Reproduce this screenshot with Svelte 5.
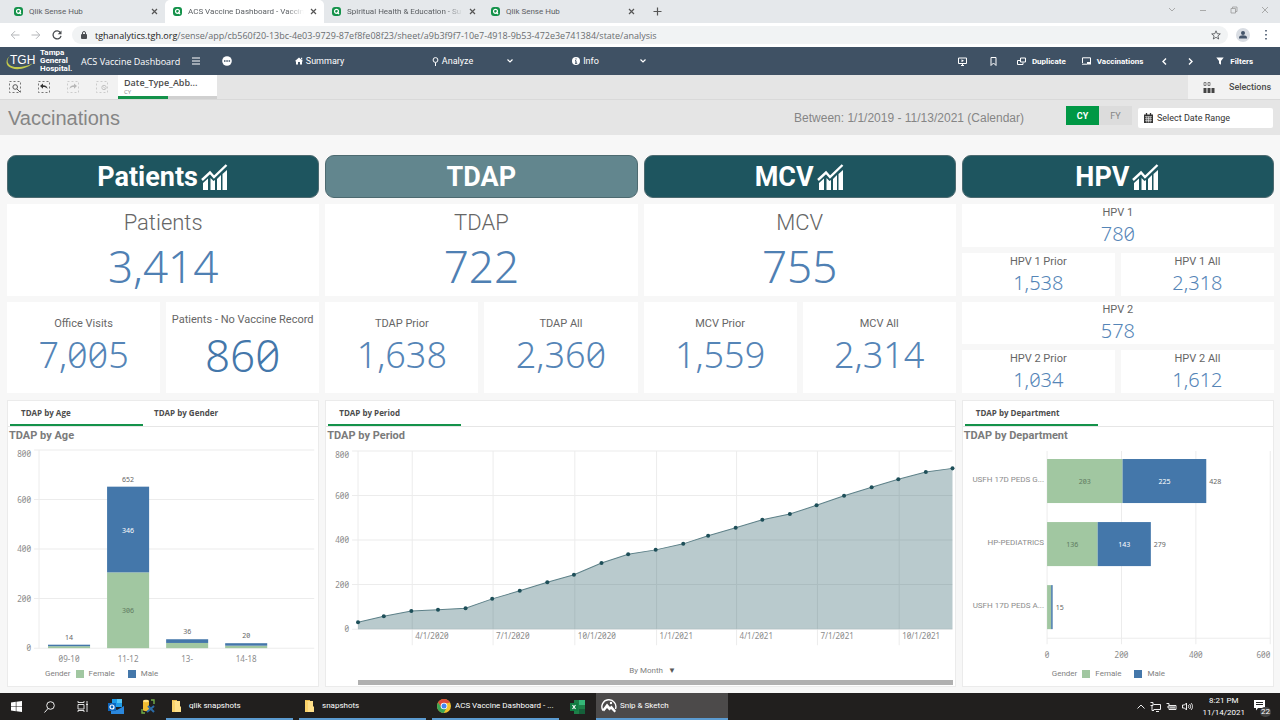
<script lang="ts">
  type Kpi = { label: string; value: string; size: string };
  type Bar = { name: string; female: number; male: number; showParts: boolean };

  const browserTabs = [
    { title: "Qlik Sense Hub", active: false },
    { title: "ACS Vaccine Dashboard - Vaccin", active: true },
    { title: "Spiritual Health & Education - Su", active: false },
    { title: "Qlik Sense Hub", active: false },
  ];

  const groups: { title: string; icon: boolean; current: boolean; rows: Kpi[][] }[] = [
    {
      title: "Patients",
      icon: true,
      current: false,
      rows: [
        [{ label: "Patients", value: "3,414", size: "large" }],
        [
          { label: "Office Visits", value: "7,005", size: "medium" },
          { label: "Patients - No Vaccine Record", value: "860", size: "medium strong" },
        ],
      ],
    },
    {
      title: "TDAP",
      icon: false,
      current: true,
      rows: [
        [{ label: "TDAP", value: "722", size: "large" }],
        [
          { label: "TDAP Prior", value: "1,638", size: "medium" },
          { label: "TDAP All", value: "2,360", size: "medium" },
        ],
      ],
    },
    {
      title: "MCV",
      icon: true,
      current: false,
      rows: [
        [{ label: "MCV", value: "755", size: "large" }],
        [
          { label: "MCV Prior", value: "1,559", size: "medium" },
          { label: "MCV All", value: "2,314", size: "medium" },
        ],
      ],
    },
    {
      title: "HPV",
      icon: true,
      current: false,
      rows: [
        [{ label: "HPV 1", value: "780", size: "small" }],
        [
          { label: "HPV 1 Prior", value: "1,538", size: "small" },
          { label: "HPV 1 All", value: "2,318", size: "small" },
        ],
        [{ label: "HPV 2", value: "578", size: "small" }],
        [
          { label: "HPV 2 Prior", value: "1,034", size: "small" },
          { label: "HPV 2 All", value: "1,612", size: "small" },
        ],
      ],
    },
  ];

  const ages: Bar[] = [
    { name: "09-10", female: 8, male: 6, showParts: false },
    { name: "11-12", female: 306, male: 346, showParts: true },
    { name: "13-", female: 21, male: 15, showParts: false },
    { name: "14-18", female: 10, male: 10, showParts: false },
  ];

  const departments: Bar[] = [
    { name: "USFH 17D PEDS G...", female: 203, male: 225, showParts: true },
    { name: "HP-PEDIATRICS", female: 136, male: 143, showParts: true },
    { name: "USFH 17D PEDS A...", female: 11, male: 4, showParts: false },
  ];

  // running totals at each month end, January 2020 to November 2021
  const totals = [
    31, 58, 82, 87, 94, 136, 172, 211, 244, 297, 336, 356, 383, 419, 455, 491, 517, 556, 599, 637,
    673, 706, 722,
  ];
  const quarters = [
    [2020, 4],
    [2020, 7],
    [2020, 10],
    [2021, 1],
    [2021, 4],
    [2021, 7],
    [2021, 10],
  ];

  const DAY = 86400000;
  const start = Date.UTC(2020, 0, 31);
  const span = (Date.UTC(2021, 10, 30) - start) / DAY;

  const ticks = [0, 200, 400, 600, 800];

  const ageY = (v: number) => 204 - (v * 198) / 800;
  const ageX = (i: number) => 40 + i * 59;
  const periodY = (v: number) => 185 - (v * 178) / 800;
  const periodX = (time: number) => 32 + ((time - start) / DAY / span) * 594;
  const deptX = (v: number) => 84 + (v * 223) / 600;
  const deptY = (i: number) => 15 + i * 63;

  const points = totals.map((v, i) => ({ x: periodX(Date.UTC(2020, i + 1, 0)), y: periodY(v) }));
  const line = points.map((p) => `${p.x},${p.y}`).join(" ");
</script>

{#snippet qlik()}
  <svg width="9" height="9" viewBox="0 0 9 9" aria-hidden="true">
    <rect width="9" height="9" rx="3" fill="#14924a" />
    <circle cx="4.5" cy="4.3" r="2" fill="none" stroke="#fff" stroke-width="1.2" />
    <path d="M5 5l2 2" stroke="#fff" stroke-width="1.2" />
  </svg>
{/snippet}

{#snippet chevron()}
  <svg class="chevron" width="6" height="4" viewBox="0 0 6 4" aria-hidden="true">
    <path d="M.5 .5L3 3L5.5 .5" fill="none" stroke="currentColor" stroke-width="1.2" />
  </svg>
{/snippet}

{#snippet folder()}
  <svg width="12" height="14" viewBox="0 0 12 14" aria-hidden="true">
    <path d="M1 1h5v12H1z" fill="#e9b94a" />
    <path d="M3 2h6v5l1 1v5H3z" fill="#ffe08a" />
    <path d="M1 1l3 2v10H1z" fill="#fbd36b" />
  </svg>
{/snippet}

{#snippet legend()}
  <span>Gender</span>
  <i class="swatch female"></i><span>Female</span>
  <i class="swatch male"></i><span>Male</span>
{/snippet}

<div class="screen">
  <div class="tab-strip">
    {#each browserTabs as tab}
      <div class="tab" class:active={tab.active}>
        {@render qlik()}
        <a href="#tab" class:long={tab.title.length > 20}>{tab.title}</a>
        <button aria-label="Close tab">
          <svg width="7" height="7" viewBox="0 0 7 7"><path d="M1 1l5 5M6 1l-5 5" stroke="#555" stroke-width="1.2" /></svg>
        </button>
      </div>
    {/each}
    <button class="new-tab" aria-label="New tab">
      <svg width="9" height="9" viewBox="0 0 9 9"><path d="M4.5 .5v8M.5 4.5h8" stroke="#555" stroke-width="1.2" /></svg>
    </button>
    <div class="window-buttons">
      <button aria-label="Search tabs"><svg width="8" height="8" viewBox="0 0 8 8"><path d="M1 2l3 3l3-3" /></svg></button>
      <button aria-label="Minimize"><svg width="8" height="8" viewBox="0 0 8 8"><path d="M1 4.5h6" /></svg></button>
      <button aria-label="Restore"><svg width="8" height="8" viewBox="0 0 8 8"><path d="M1 2.5h4.5v4.5h-4.5zM2.5 2.5v-1.5h4.5v4.5h-1.5" /></svg></button>
      <button aria-label="Close window"><svg width="8" height="8" viewBox="0 0 8 8"><path d="M1 1l6 6M7 1l-6 6" /></svg></button>
    </div>
  </div>

  <div class="address-row">
    <button aria-label="Back"><svg width="10" height="10" viewBox="0 0 10 10"><path d="M9.5 5h-8M5 1.2L1.2 5L5 8.8" stroke="#b4b6b9" /></svg></button>
    <button aria-label="Forward"><svg width="10" height="10" viewBox="0 0 10 10"><path d="M.5 5h8M5 1.2L8.8 5L5 8.8" stroke="#b4b6b9" /></svg></button>
    <button aria-label="Reload">
      <svg width="10" height="10" viewBox="0 0 10 10">
        <path d="M8.5 2.8A4 4 0 1 0 9 5.8" stroke="#4a4d51" stroke-width="1.3" />
        <path d="M9.5 .5v3.8H5.7z" class="arrow" />
      </svg>
    </button>
    <div class="address">
      <svg width="6" height="8" viewBox="0 0 6 8" aria-hidden="true">
        <rect y="3" width="6" height="5" rx="1" fill="#4a4d51" />
        <path d="M1.5 3.5V2a1.5 1.5 0 0 1 3 0v1.5" fill="none" stroke="#4a4d51" />
      </svg>
      <span class="url"><b>tghanalytics.tgh.org</b>/sense/app/cb560f20-13bc-4e03-9729-87ef8fe08f23/sheet/a9b3f9f7-10e7-4918-9b53-472e3e741384/state/analysis</span>
      <svg width="10" height="10" viewBox="0 0 10 10" aria-hidden="true">
        <path d="M5 .8l1.2 2.9l3.1 .2l-2.400 2l.8 3.1L5 7.3L2.3 9l.8-3.1l-2.400-2l3.1-.2z" fill="none" stroke="#4a4d51" stroke-width=".8" />
      </svg>
    </div>
    <button class="profile" aria-label="Profile">
      <svg width="14" height="14" viewBox="0 0 14 14">
        <circle cx="7" cy="7" r="7" fill="#d9dde3" />
        <circle cx="7" cy="5" r="2" fill="#44546a" />
        <path d="M3 10.5V9.5c0-3 8-3 8 0v1z" />
      </svg>
    </button>
    <button class="more" aria-label="Browser menu">
      <svg width="4" height="10" viewBox="0 0 4 10"><path d="M1.200 0h1.6v1.6h-1.6zM1.200 4h1.6v1.6h-1.6zM1.200 8h1.6v1.6h-1.6z" /></svg>
    </button>
  </div>

  <header class="app-bar">
    <div class="brand">
      <svg width="30" height="18" viewBox="0 0 30 18" aria-hidden="true">
        <path d="M4 4C-1 9 2 15 11 15C18 15 24 13 27 11C20 18 7 19 2 14C-1 10 1 6 4 4z" fill="#c4ca4c" />
        <text x="4" y="12" class="tgh">TGH</text>
      </svg>
      <div class="brand-name">Tampa<br />General<br />Hospital.</div>
    </div>
    <span class="app-name">ACS Vaccine Dashboard</span>
    <button aria-label="Navigation menu">
      <svg width="8" height="8" viewBox="0 0 8 8"><path d="M0 1h8M0 4h8M0 7h8" stroke="#fff" stroke-width="1.2" /></svg>
    </button>
    <button class="dots" aria-label="More options">
      <svg width="10" height="10" viewBox="0 0 10 10">
        <circle cx="5" cy="5" r="4.8" fill="#fff" />
        <path d="M2 4.300h1.5v1.5H2zM4.300 4.300h1.5v1.5H4.300zM6.600 4.300h1.5v1.5H6.600z" fill="#3f5164" />
      </svg>
    </button>
    <nav>
      <a href="#summary">
        <svg width="8" height="8" viewBox="0 0 8 8"><path d="M4 .5L8 4L7 4.5V7.5H5V5H3v2.5H1V4.5L0 4zM6 .8h1.2v2L6 1.8z" fill="#fff" /></svg>
        Summary
      </a>
      <a href="#analyze">
        <svg width="7" height="9" viewBox="0 0 7 9"><circle cx="3.5" cy="3" r="2.4" fill="none" stroke="#fff" /><path d="M3.5 5.5V9" stroke="#fff" /></svg>
        Analyze
        {@render chevron()}
      </a>
      <a href="#info">
        <svg width="8" height="8" viewBox="0 0 8 8"><circle cx="4" cy="4" r="4" fill="#fff" /><path d="M4 1.3v1.2M3 3.7h1v2.5M3 6.3h2.2" stroke="#3f5164" fill="none" /></svg>
        Info
        {@render chevron()}
      </a>
    </nav>
    <div class="app-actions">
      <button class="only-icon" aria-label="Present">
        <svg width="9" height="9" viewBox="0 0 9 9"><path d="M.5 1h8v5.5h-8zM3 8.5h3M4.5 6.5v2" fill="none" stroke="#fff" /><path d="M3.5 2.3l2.5 1.5l-2.5 1.5z" fill="#fff" /></svg>
      </button>
      <button class="only-icon" aria-label="Bookmarks">
        <svg width="7" height="9" viewBox="0 0 7 9"><path d="M1 .5h5v8L3.5 6L1 8.5z" fill="none" stroke="#fff" /></svg>
      </button>
      <button>
        <svg width="9" height="9" viewBox="0 0 9 9"><path d="M3.5 1h5v4h-5zM3 3.5H.5v4H6V5.5" fill="none" stroke="#fff" /></svg>
        Duplicate
      </button>
      <button>
        <svg width="9" height="8" viewBox="0 0 9 8"><path d="M.5 6V.8h8V6M0 7.2h5" fill="none" stroke="#fff" /><path d="M5 5h4v2.5H5z" fill="#fff" /></svg>
        Vaccinations
      </button>
      <button aria-label="Previous sheet"><svg width="5" height="7" viewBox="0 0 5 7"><path d="M4 .5L1 3.5L4 6.5" fill="none" stroke="#fff" stroke-width="1.4" /></svg></button>
      <button aria-label="Next sheet"><svg width="5" height="7" viewBox="0 0 5 7"><path d="M1 .5L4 3.5L1 6.5" fill="none" stroke="#fff" stroke-width="1.4" /></svg></button>
      <button class="filters">
        <svg width="8" height="8" viewBox="0 0 8 8"><path d="M.3 .5h7.4L5 4v3.7L3 6.5V4z" fill="#fff" /></svg>
        Filters
      </button>
    </div>
  </header>

  <div class="selection-bar">
    <div class="tools">
      <button aria-label="Smart search">
        <svg width="12" height="12" viewBox="0 0 12 12"><path class="dash" d="M.5 .5h11v11h-11z" /><circle cx="6.2" cy="6" r="2.3" /><path d="M8 8l3 3" /></svg>
      </button>
      <button aria-label="Step back">
        <svg width="12" height="12" viewBox="0 0 12 12"><path class="dash" d="M.5 .5h11v11h-11z" /><path d="M2 5l3-2.5v1.7c3 0 4.5 1.3 4.5 3.8c-1-1.5-2.200-2-4.5-2v1.7z" class="solid" /></svg>
      </button>
      <button aria-label="Step forward" disabled>
        <svg width="12" height="12" viewBox="0 0 12 12"><path class="dash" d="M.5 .5h11v11h-11z" /><path d="M10 5L7 2.5v1.7c-3 0-4.5 1.3-4.5 3.8c1-1.5 2.200-2 4.5-2v1.7z" class="solid" /></svg>
      </button>
      <button aria-label="Clear all selections" disabled>
        <svg width="12" height="12" viewBox="0 0 12 12"><path class="dash" d="M.5 .5h11v11h-11z" /><circle cx="8" cy="6.5" r="2.2" /><path d="M6.8 5.3l2.4 2.4" /></svg>
      </button>
    </div>
    <button class="selection">
      <strong>Date_Type_Abb...</strong>
      <small>CY</small>
      <span class="share"></span>
    </button>
    <button class="selections">
      <svg width="12" height="11" viewBox="0 0 12 11"><path d="M1 .5h2v3H1zM5 .5h2v3H5z" fill="none" stroke="#666" stroke-width=".8" /><path d="M.5 6h3v5h-3zM4.5 6h3v5h-3zM8.5 6h3v5h-3z" fill="#444" /></svg>
      Selections
    </button>
  </div>

  <div class="sheet-title">
    <h1>Vaccinations</h1>
    <span class="between">Between: 1/1/2019 - 11/13/2021 (Calendar)</span>
    <div class="year-type">
      <button class="on">CY</button><button>FY</button>
    </div>
    <button class="date-range">
      <svg width="9" height="10" viewBox="0 0 9 10"><path d="M0 1.5h9V10H0z" fill="#333" /><path d="M2.5 0v2.5M6.5 0v2.5" stroke="#333" stroke-width="1.3" /><path d="M1 3.7h7M1 5.7h7M1 7.7h7M2.8 3.5V9.5M4.5 3.5V9.5M6.2 3.5V9.5" stroke="#fff" stroke-width=".6" /></svg>
      Select Date Range
    </button>
  </div>

  <main>
    {#each groups as group}
      <section class="group">
        <button class="group-title" class:current={group.current}>
          {group.title}
          {#if group.icon}
            <svg width="28" height="26" viewBox="0 0 28 26" aria-hidden="true">
              <path d="M1 16L9 8.5l4 4.5L25.500 1" fill="none" stroke="#fff" stroke-width="2.4" />
              <path d="M2 19l5-4.5V26H2zM9.500 14l3 3l1.5-1V26H9.500zM16 15l4-4V26h-4zM21.5 10L26 6v20h-4.5z" fill="#fff" />
            </svg>
          {/if}
        </button>
        {#each group.rows as row}
          <div class="kpi-row">
            {#each row as kpi}
              <div class="kpi {kpi.size}">
                <span class="label">{kpi.label}</span>
                <span class="value">{kpi.value}</span>
              </div>
            {/each}
          </div>
        {/each}
      </section>
    {/each}

    <section class="panel">
      <div class="panel-tabs">
        <button class="on">TDAP by Age</button>
        <button>TDAP by Gender</button>
      </div>
      <h2>TDAP by Age</h2>
      <svg class="chart" viewBox="0 0 310 220">
        {#each ticks as t}
          <line class="grid" x1="26" x2="306" y1={ageY(t)} y2={ageY(t)} />
          <text class="end" x="23" y={t === 800 ? 13 : ageY(t) + 3}>{t}</text>
        {/each}
        <line class="grid" x1="31" x2="31" y1="6" y2="204" />
        {#each ages as bar, i}
          {@const total = bar.female + bar.male}
          <rect class="female" x={ageX(i)} y={ageY(bar.female)} width="42" height={204 - ageY(bar.female)} />
          <rect class="male" x={ageX(i)} y={ageY(total)} width="42" height={ageY(bar.female) - ageY(total)} />
          <text class="mid total" x={ageX(i) + 21} y={ageY(total) - 5}>{total}</text>
          <text class="mid" x={ageX(i) + 21} y="218">{bar.name}</text>
          {#if bar.showParts}
            <text class="mid on-male" x={ageX(i) + 21} y={ageY(bar.female + bar.male / 2) + 3}>{bar.male}</text>
            <text class="mid on-female" x={ageX(i) + 21} y={ageY(bar.female / 2) + 3}>{bar.female}</text>
          {/if}
        {/each}
      </svg>
      <div class="legend">{@render legend()}</div>
    </section>

    <section class="panel wide">
      <div class="panel-tabs">
        <button class="on">TDAP by Period</button>
      </div>
      <h2>TDAP by Period</h2>
      <svg class="chart" viewBox="0 0 628 220">
        {#each ticks as t}
          <line class="grid" x1="26" x2="626" y1={periodY(t)} y2={periodY(t)} />
          <text class="end" x="23" y={t === 800 ? 14 : periodY(t) + 3}>{t}</text>
        {/each}
        <line class="grid" x1="32" x2="32" y1="7" y2="185" />
        {#each quarters as [year, month]}
          {@const x = periodX(Date.UTC(year, month - 1, 1))}
          <line class="grid" x1={x} x2={x} y1="7" y2="201" />
          <text x={x + 3} y="195">{month}/1/{year}</text>
        {/each}
        <polygon class="area" points="32,185 {line} 626,185" />
        <polyline class="trend" points={line} />
        {#each points as p}
          <circle class="dot" cx={p.x} cy={p.y} r="2" />
        {/each}
      </svg>
      <button class="by-month">By Month <span>▼</span></button>
      <div class="scroller"></div>
    </section>

    <section class="panel">
      <div class="panel-tabs">
        <button class="on">TDAP by Department</button>
      </div>
      <h2>TDAP by Department</h2>
      <svg class="chart" viewBox="0 0 310 220">
        {#each [0, 200, 400, 600] as t}
          <line class="grid" x1={deptX(t)} x2={deptX(t)} y1="7" y2="200" />
          <text class={t === 600 ? "end" : "mid"} x={deptX(t)} y="214">{t}</text>
        {/each}
        <line class="grid" x1="84" x2="307" y1="194" y2="194" />
        {#each departments as bar, i}
          {@const total = bar.female + bar.male}
          <rect class="female" x="84" y={deptY(i)} width={deptX(bar.female) - 84} height="44" />
          <rect class="male" x={deptX(bar.female)} y={deptY(i)} width={deptX(total) - deptX(bar.female)} height="44" />
          <text class="end dept" x="81" y={deptY(i) + 23}>{bar.name}</text>
          <text class="total" x={deptX(total) + 3} y={deptY(i) + 25}>{total}</text>
          {#if bar.showParts}
            <text class="mid on-female" x={deptX(bar.female / 2)} y={deptY(i) + 25}>{bar.female}</text>
            <text class="mid on-male" x={deptX(bar.female + bar.male / 2)} y={deptY(i) + 25}>{bar.male}</text>
          {/if}
        {/each}
      </svg>
      <div class="legend inset">{@render legend()}</div>
    </section>
  </main>

  <footer class="taskbar">
    <button class="pin" aria-label="Start">
      <svg width="11" height="11" viewBox="0 0 11 11"><path d="M0 1.5l4.8-.7v4.4H0zM5.4 .7L11 0v5.2H5.4zM0 5.8h4.8v4.4L0 9.5zM5.4 5.8H11V11l-5.6-.7z" fill="#fff" /></svg>
    </button>
    <button class="pin" aria-label="Search">
      <svg width="11" height="12" viewBox="0 0 11 12"><circle cx="6.5" cy="4.5" r="3.8" fill="none" stroke="#eee" /><path d="M4 7.5L.5 11.5" stroke="#eee" /></svg>
    </button>
    <button class="pin" aria-label="Task view">
      <svg width="12" height="11" viewBox="0 0 12 11"><path d="M1 3.5h6v4.5H1zM1 0v1.5h6V0M1 11V9.5h6V11M10 0v2M10 5v6" fill="none" stroke="#ddd" /><path d="M9 2.5h2v2H9z" fill="#ddd" /></svg>
    </button>
    <button class="pin" aria-label="Outlook">
      <svg width="16" height="15" viewBox="0 0 16 15"><path d="M4 0h10v8H4z" fill="#1c9be8" /><path d="M9 0h5v4H9z" fill="#53c4f5" /><path d="M3 8l6 3l7-4v8H3z" fill="#2b87dc" /><path d="M0 4h8v8H0z" fill="#0f66bd" /><circle cx="4" cy="8" r="2" fill="none" stroke="#fff" stroke-width="1.2" /></svg>
    </button>
    <button class="pin" aria-label="Database tools">
      <svg width="15" height="15" viewBox="0 0 15 15"><path d="M2 2v9c0 1.5 6 1.5 6 0V2z" fill="#f0bd32" /><ellipse cx="5" cy="2" rx="3" ry="1.3" fill="#ffe383" /><path d="M10 1h3v4M1 10v4h3" fill="none" stroke="#71ad46" stroke-width="1.4" /><path d="M6 13l7-6M7 7l6 6" stroke="#2b6ca8" stroke-width="2" /></svg>
    </button>
    <button class="task">{@render folder()}<span>qlik snapshots</span></button>
    <button class="task">{@render folder()}<span>snapshots</span></button>
    <button class="task chrome">
      <svg width="14" height="14" viewBox="0 0 14 14">
        <circle cx="7" cy="7" r="7" fill="#f2c12e" />
        <path d="M1 3.5A7 7 0 0 1 13 3.5L7 5L4.3 8.5z" fill="#de4b3c" />
        <path d="M1 3.5A7 7 0 0 0 6.8 14L9.5 9L4.5 8.5z" fill="#3aa657" />
        <circle cx="7" cy="7" r="3.3" fill="#fff" /><circle cx="7" cy="7" r="2.5" fill="#4285f4" />
      </svg>
      <span>ACS Vaccine Dashboard - ...</span>
    </button>
    <button class="pin excel" aria-label="Excel">
      <svg width="15" height="14" viewBox="0 0 15 14"><path d="M4 0h11v14H4z" fill="#1d7f48" /><path d="M9 0h6v5H9z" fill="#35b778" /><path d="M9 9h6v5H9z" fill="#15603a" /><path d="M0 3h8v8H0z" fill="#107c41" /><path d="M2.5 5l3 4M5.5 5l-3 4" stroke="#fff" stroke-width="1.1" /></svg>
    </button>
    <button class="task snip">
      <svg width="16" height="14" viewBox="0 0 16 14"><path d="M2 11.5A7 7 0 1 1 14.500 10" fill="none" stroke="#fff" stroke-width="1.4" /><path d="M1.5 10.500L6 4.500l3 3.500l1.500-1.500L15 12l-1.500 1.5L10 10l-1.500 1.500L6 9l-3 3.500z" fill="#fff" /><circle cx="10" cy="4" r="1.2" fill="#fff" /></svg>
      <span>Snip &amp; Sketch</span>
    </button>
    <div class="tray">
      <svg width="8" height="5" viewBox="0 0 8 5"><path d="M.5 4.5L4 1l3.5 3.5" /></svg>
      <svg width="11" height="10" viewBox="0 0 11 10"><path d="M3.5 2.5h7v5h-7M6 9.5h3M.5 .5h2.5v3H.5M2 3.5v5h2" /></svg>
      <svg width="11" height="8" viewBox="0 0 11 8"><path d="M3 2.5h7v4H3zM.5 .5h2.5v2.5M2 3v2M4 4h5M4 5h5" /></svg>
      <svg width="11" height="9" viewBox="0 0 11 9"><path d="M.5 3h2L4.5 1v7l-2-2h-2zM6 3c1 1 1 2 0 3M7.5 2c1.5 1.5 1.5 3.5 0 5M9 1c2 2 2 5 0 7" /></svg>
      <div class="clock">8:21 PM<br />11/14/2021</div>
      <div class="notice">
        <svg width="11" height="11" viewBox="0 0 11 11"><path d="M0 0h11v8H4l-2 2.5V8H0z" /><path class="rule" d="M2 2.5h7M2 4.5h7" /></svg>
        <span class="count">22</span>
      </div>
    </div>
  </footer>
</div>

<style>
  :global(body) {
    background: #f7f7f7;
  }

  .screen {
    min-height: 100vh;
    display: flex;
    flex-direction: column;
    font-family: "Open Sans", "Noto Sans", sans-serif;
    font-size: 8px;
    color: #4c4c4c;
  }

  button {
    display: flex;
    align-items: center;
    justify-content: center;
    padding: 0;
    border: 0;
    background: none;
    color: inherit;
    font: inherit;
  }

  a {
    color: inherit;
    text-decoration: none;
  }

  svg {
    flex: none;
  }

  /* browser */
  .tab-strip {
    display: flex;
    height: 23px;
    padding-left: 6px;
    background: #e5e8eb;
    color: #5c6064;
    font-family: Roboto, sans-serif;
  }

  .tab {
    display: flex;
    align-items: center;
    gap: 6px;
    width: 159px;
    padding: 0 7px 0 8px;
    box-sizing: border-box;
    border-radius: 5px 5px 0 0;
  }

  .tab.active {
    background: #fff;
  }

  .tab a {
    flex: 1;
    white-space: nowrap;
  }

  .tab .long {
    mask-image: linear-gradient(90deg, #000 85%, transparent);
  }

  .new-tab {
    width: 30px;
  }

  .window-buttons {
    display: flex;
    margin-left: auto;
    padding-bottom: 4px;
  }

  .window-buttons button {
    width: 31px;
  }

  .window-buttons path {
    fill: none;
    stroke: #999;
    stroke-width: 0.8;
  }

  .address-row {
    display: flex;
    align-items: center;
    height: 24px;
    padding: 0 6px 0 4px;
    background: #fff;
  }

  .address-row > button {
    width: 21px;
  }

  .address-row path {
    fill: none;
  }

  .address-row .arrow {
    fill: #4a4d51;
  }

  .address-row .profile {
    width: 30px;
  }

  .address-row .more {
    width: 16px;
  }

  .address-row .profile path,
  .address-row .more path {
    fill: #44546a;
  }

  .address {
    flex: 1;
    display: flex;
    align-items: center;
    gap: 8px;
    height: 18px;
    margin-left: 5px;
    padding: 0 7px 0 9px;
    border-radius: 9px;
    background: #f1f3f4;
  }

  .url {
    flex: 1;
    color: #6a6d70;
    font-size: 9px;
  }

  .url b {
    font-weight: 400;
    color: #222;
  }

  /* app bar */
  .app-bar {
    display: flex;
    align-items: center;
    height: 28px;
    padding: 0 27px 0 6px;
    background: #3f5164;
    color: #fff;
  }

  .brand {
    display: flex;
    align-items: center;
    gap: 4px;
    width: 75px;
  }

  .tgh {
    fill: #fff;
    font: 12px "Liberation Sans", sans-serif;
  }

  .brand-name {
    font: bold 8px/8px Roboto, sans-serif;
  }

  .app-name {
    width: 111px;
    font-size: 9px;
    white-space: nowrap;
  }

  .app-bar .dots {
    width: 53px;
  }

  nav {
    display: flex;
    font: 9px Roboto, sans-serif;
  }

  nav a {
    position: relative;
    display: flex;
    align-items: center;
    justify-content: center;
    gap: 3px;
    width: 133px;
  }

  nav .chevron {
    position: absolute;
    right: 6px;
  }

  .app-actions {
    display: flex;
    gap: 16px;
    margin-left: auto;
    font: bold 8px Roboto, sans-serif;
  }

  .app-actions button {
    gap: 6px;
    min-width: 10px;
  }

  .app-actions .only-icon {
    min-width: 15px;
  }

  .app-actions .filters {
    margin-left: 5px;
  }

  /* selections */
  .selection-bar {
    display: flex;
    height: 25px;
    border-bottom: 1px solid #d9d9d9;
    box-sizing: border-box;
    background: #e5e5e5;
  }

  .tools {
    display: flex;
    padding-right: 2px;
    background: #f2f2f2;
  }

  .tools button {
    width: 29px;
  }

  .tools svg * {
    fill: none;
    stroke: #555;
  }

  .tools svg .dash {
    stroke-dasharray: 2 2;
    stroke-width: 0.8;
  }

  .tools svg .solid {
    fill: #333;
    stroke: none;
  }

  .tools button:disabled {
    opacity: 0.3;
  }

  .selection {
    flex-direction: column;
    align-items: flex-start;
    justify-content: space-between;
    width: 99px;
    background: #fff;
    line-height: 10px;
  }

  .selection strong {
    padding: 3px 6px 0;
    font-size: 9px;
    font-weight: 600;
  }

  .selection small {
    padding: 0 6px;
    font-size: 6px;
    line-height: 7px;
    color: #8c8c8c;
  }

  .share {
    width: 100%;
    height: 3px;
    background: linear-gradient(90deg, #14924a 50%, #d0d0d0 50%);
  }

  .selections {
    gap: 14px;
    width: 92px;
    padding-left: 6px;
    box-sizing: border-box;
    margin-left: auto;
    background: #f2f2f2;
    font: 500 9px Roboto, sans-serif;
  }

  .sheet-title {
    display: flex;
    align-items: center;
    height: 35px;
    padding: 0 7px 0 8px;
    background: #e5e5e5;
    color: #858585;
    font-family: "Liberation Sans", sans-serif;
  }

  h1 {
    margin: 0;
    font-size: 20px;
    font-weight: 400;
    line-height: 40px;
  }

  .between {
    margin-left: auto;
    font-size: 12px;
    line-height: 40px;
  }

  .year-type {
    display: flex;
    height: 19px;
    margin: 0 6px 4px 42px;
    font-family: Roboto, sans-serif;
    font-size: 9px;
  }

  .year-type button {
    width: 33px;
    background: #dcdcdc;
  }

  .year-type .on {
    background: #009845;
    color: #fff;
    font-weight: 700;
  }

  .date-range {
    justify-content: flex-start;
    gap: 4px;
    width: 135px;
    height: 20px;
    padding-left: 6px;
    border-radius: 2px;
    background: #fff;
    color: #333;
    font: 9px Roboto, sans-serif;
  }

  /* sheet */
  main {
    flex: 1;
    display: grid;
    grid-template-columns: repeat(4, minmax(0, 1fr));
    grid-template-rows: auto 1fr;
    gap: 7px 6px;
    padding: 20px 6px 6px 7px;
    font-family: Roboto, sans-serif;
  }

  .group {
    display: flex;
    flex-direction: column;
    gap: 6px;
    height: 238px;
  }

  .group-title {
    flex: none;
    gap: 3px;
    height: 43px;
    border: 1px solid #4d6a70;
    border-radius: 9px;
    background: #1e555f;
    color: #fff;
    font-size: 27px;
    font-weight: 700;
  }

  .group-title.current {
    background: #62868e;
  }

  .kpi-row {
    flex: 1;
    display: flex;
    gap: 6px;
  }

  .kpi {
    flex: 1 1 0;
    min-width: 0;
    display: flex;
    flex-direction: column;
    align-items: center;
    justify-content: center;
    background: #fff;
    white-space: nowrap;
  }

  .label {
    color: #666;
    font-size: 11px;
    line-height: 16px;
  }

  .value {
    color: #5585b7;
    font-family: "Noto Sans", sans-serif;
    font-variant-numeric: slashed-zero;
    font-weight: 300;
  }

  .large .label {
    font-size: 22px;
    font-weight: 300;
    line-height: 32px;
  }

  .large .value {
    color: #4f80b3;
    font-size: 44px;
    line-height: 54px;
  }

  .medium .value {
    font-size: 36px;
    line-height: 46px;
  }

  .strong .value {
    color: #4477aa;
    font-size: 44px;
    line-height: 54px;
  }

  .small .value {
    font-size: 20px;
    line-height: 25px;
  }

  .panel {
    display: flex;
    flex-direction: column;
    border: 1px solid #ebebeb;
    background: #fff;
  }

  .wide {
    grid-column: span 2;
  }

  .panel-tabs {
    display: flex;
    height: 25px;
    padding-left: 2px;
    border-bottom: 1px solid #e6e6e6;
    font-family: "Open Sans", sans-serif;
  }

  .panel-tabs button {
    justify-content: flex-start;
    width: 133px;
    padding-left: 11px;
    box-sizing: border-box;
    border-bottom: 2px solid transparent;
    font-weight: 700;
  }

  .panel-tabs .on {
    border-color: #14924a;
  }

  h2 {
    margin: 0;
    padding-left: 1px;
    color: #7b7b7b;
    font-size: 11px;
    line-height: 17px;
  }

  .chart {
    display: block;
    width: 100%;
  }

  .chart text {
    fill: #8c8c8c;
    font: 8px "Noto Sans", sans-serif;
    font-variant-numeric: slashed-zero;
  }

  .chart .mid {
    text-anchor: middle;
  }

  .chart .end {
    text-anchor: end;
  }

  .chart .dept {
    font-family: Roboto, sans-serif;
  }

  .chart .total {
    fill: #666;
    font-size: 7px;
  }

  .chart .on-female {
    fill: #5f7a60;
    font-size: 7px;
  }

  .chart .on-male {
    fill: #fff;
    font-size: 7px;
  }

  .grid {
    stroke: #ececec;
  }

  rect.female {
    fill: #a1c7a1;
  }

  rect.male {
    fill: #4477aa;
  }

  .area {
    fill: #1e555f;
    fill-opacity: 0.31;
  }

  .trend {
    fill: none;
    stroke: #5d8088;
  }

  .dot {
    fill: #1e4f59;
  }

  .legend {
    display: flex;
    align-items: center;
    gap: 5px;
    padding: 5px 0 0 37px;
    color: #7f7f7f;
    line-height: 10px;
  }

  .legend.inset {
    padding-left: 89px;
  }

  .swatch {
    width: 8px;
    height: 8px;
  }

  .swatch.female {
    background: #a1c7a1;
  }

  .swatch.male {
    margin-left: 8px;
    background: #4477aa;
  }

  .by-month {
    gap: 5px;
    padding-left: 24px;
    color: #7f7f7f;
    line-height: 14px;
  }

  .by-month span {
    color: #595959;
  }

  .scroller {
    height: 5px;
    margin: 2px 2px 0 32px;
    background: #b0b0b0;
  }

  /* taskbar */
  .taskbar {
    display: flex;
    height: 27px;
    background: #211f1e;
    color: #fff;
    font: 8px Roboto, sans-serif;
  }

  .pin {
    width: 33px;
  }

  .excel {
    width: 37px;
  }

  .task {
    justify-content: flex-start;
    gap: 6px;
    width: 127px;
    margin: 0 5px 0 1px;
    padding: 0 5px;
    box-sizing: border-box;
    border-bottom: 2px solid #5b9bd1;
    white-space: nowrap;
  }

  .chrome {
    gap: 4px;
    margin-right: 0;
  }

  .snip {
    gap: 3px;
    width: 132px;
    margin: 0;
    background: #4c4a4a;
  }

  .tray {
    display: flex;
    align-items: center;
    gap: 5px;
    margin-left: auto;
    padding-right: 9px;
  }

  .tray path {
    fill: none;
    stroke: #eee;
  }

  .clock {
    padding: 0 4px;
    text-align: center;
    line-height: 12px;
  }

  .notice {
    position: relative;
    width: 17px;
    height: 14px;
  }

  .notice path {
    fill: #fff;
    stroke: none;
  }

  .notice .rule {
    stroke: #222;
  }

  .count {
    position: absolute;
    right: 0;
    bottom: -3px;
    padding: 0 1px;
    border-radius: 6px;
    background: #444;
    line-height: 10px;
  }
</style>
